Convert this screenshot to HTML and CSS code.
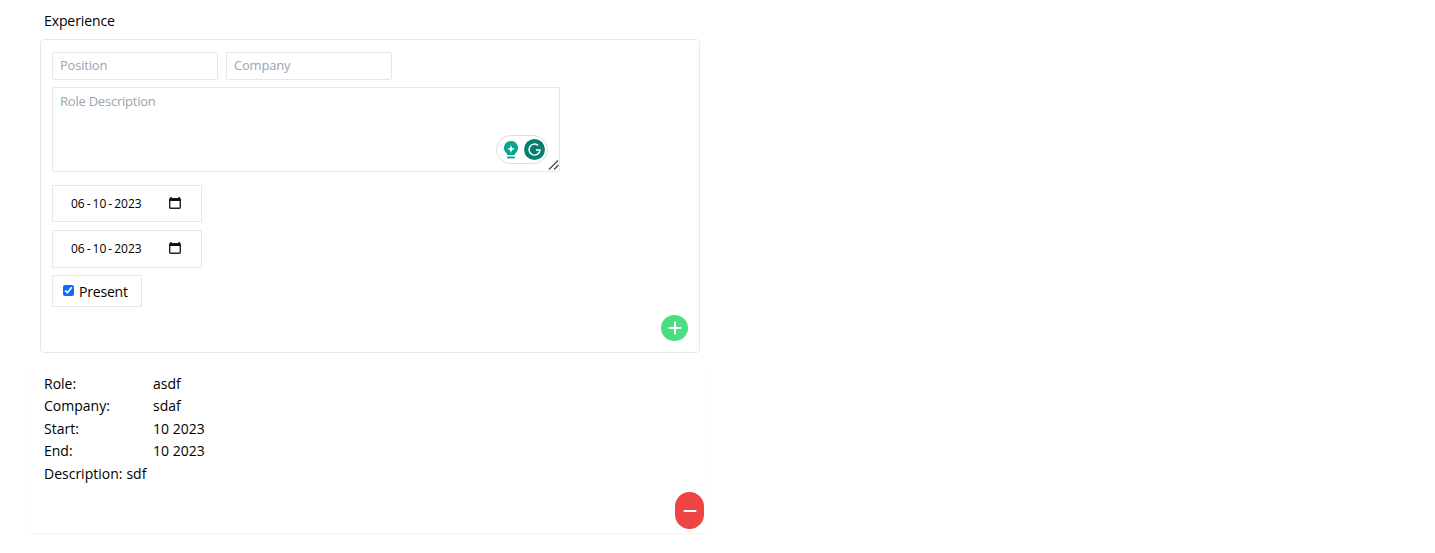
FILE: index.html
```html
<!DOCTYPE html>
<html lang="en">
<head>
<meta charset="utf-8">
<title>Experience</title>
<link rel="stylesheet" href="styles.css">
</head>
<body>
<main class="section">
  <h2 class="section-title">Experience</h2>
  <form class="card">
    <div class="row">
      <input class="field" type="text" placeholder="Position">
      <input class="field" type="text" placeholder="Company">
    </div>
    <div class="area-wrap">
      <textarea class="area" placeholder="Role Description"></textarea>
      <div class="grammarly">
        <svg class="g-bulb" width="16" height="18" viewBox="0 0 16 18"><path d="M8 0a7 7 0 0 1 4.200 12.600V13a1 1 0 0 1-1 1H4.800a1 1 0 0 1-1-1v-.4A7 7 0 0 1 8 0z" fill="#07a58e"/><path d="M8 4l1 3 3 1-3 1-1 3-1-3-3-1 3-1z" fill="#fff"/><rect x="4" y="15.500" width="8" height="2" rx="1" fill="#07a58e"/></svg>
        <svg class="g-logo" width="21" height="21" viewBox="0 0 21 21"><circle cx="10.500" cy="10.500" r="10.500" fill="#05806f"/><path d="M14.200 6.500A5.500 5.500 0 1 0 16 11h-4" fill="none" stroke="#fff" stroke-width="1.400"/></svg>
      </div>
      <svg class="grip" width="11" height="10" viewBox="0 0 11 10"><path d="M1 9.500L10 .5M6 9.500L10.500 5" stroke="#444" stroke-width="1.200"/></svg>
    </div>
    <div class="date-box first"><span class="date-text"><span>06</span><span class="sep">-</span><span>10</span><span class="sep">-</span><span>2023</span></span>
      <svg class="cal" width="14" height="14" viewBox="0 0 14 14"><path d="M3 1v2M11 1v2" stroke="#111" stroke-width="1.500"/><rect x="1.700" y="2.700" width="10.600" height="9.600" rx="1" fill="none" stroke="#222" stroke-width="1.400"/><rect x="1.500" y="2.500" width="11" height="2.500" fill="#111"/></svg>
    </div>
    <div class="date-box tall"><span class="date-text"><span>06</span><span class="sep">-</span><span>10</span><span class="sep">-</span><span>2023</span></span>
      <svg class="cal" width="14" height="14" viewBox="0 0 14 14"><path d="M3 1v2M11 1v2" stroke="#111" stroke-width="1.500"/><rect x="1.700" y="2.700" width="10.600" height="9.600" rx="1" fill="none" stroke="#222" stroke-width="1.400"/><rect x="1.500" y="2.500" width="11" height="2.500" fill="#111"/></svg>
    </div>
    <label class="present"><input class="check" type="checkbox" checked><span>Present</span></label>
    <div class="card-foot">
      <button class="add" type="button" aria-label="Add">
        <svg width="14" height="14" viewBox="0 0 14 14"><path d="M7 1.500v11M1.500 7h11" stroke="#fff" stroke-width="2" stroke-linecap="round"/></svg>
      </button>
    </div>
  </form>
  <section class="entry">
    <dl class="entry-list">
      <div class="entry-row"><dt>Role:</dt><dd>asdf</dd></div>
      <div class="entry-row"><dt>Company:</dt><dd>sdaf</dd></div>
      <div class="entry-row"><dt>Start:</dt><dd>10 2023</dd></div>
      <div class="entry-row"><dt>End:</dt><dd>10 2023</dd></div>
      <div class="entry-row"><dt class="auto">Description:</dt><dd>sdf</dd></div>
    </dl>
    <button class="remove" type="button" aria-label="Remove">
      <svg width="14" height="4" viewBox="0 0 14 4"><path d="M1.500 2h11" stroke="#fff" stroke-width="2" stroke-linecap="round"/></svg>
    </button>
  </section>
</main>
</body>
</html>
```
FILE: styles.css
```css
* { box-sizing: border-box; }
html, body { margin: 0; background: #fff; }
body { font-family: "Open Sans", "Noto Sans", sans-serif; font-size: 14px; color: #000; height: 553px; overflow: hidden; }
.section { width: 675px; margin-left: 32px; padding-top: 11px; }
.section-title { margin: 0 0 8px 12px; font-size: 14px; font-weight: 400; line-height: 20px; letter-spacing: -.1px; }
.card { width: 660px; height: 314px; margin-left: 8px; border: 1px solid #e5e7eb; border-radius: 4px; padding: 12px 11px 0; }
.row { display: flex; gap: 8px; }
.field { width: 166px; height: 28px; border: 1px solid #e5e7eb; border-radius: 2px; padding: 0 7px 2px; font: inherit; font-size: 13px; letter-spacing: -.2px; outline: 0; }
.field::placeholder, .area::placeholder { color: #9ca3af; opacity: 1; }
.area-wrap { position: relative; width: 508px; height: 85px; margin-top: 7px; }
.area { display: block; width: 508px; height: 85px; border: 1px solid #e5e7eb; border-radius: 2px; padding: 4px 7px; font: inherit; font-size: 13px; letter-spacing: -.23px; line-height: 18px; outline: 0; resize: none; }
.grammarly { position: absolute; left: 444px; top: 48px; width: 52px; height: 29px; border: 1px solid #d9dde8; border-radius: 15px; background: #fff; display: flex; align-items: center; gap: 4px; padding-left: 6px; }
.g-bulb { flex: none; }
.g-logo { flex: none; margin-left: 1px; }
.grip { position: absolute; right: 1px; bottom: 2px; }
.date-box { width: 150px; height: 37px; margin-top: 13px; border: 1px solid #e5e7eb; display: flex; align-items: center; justify-content: space-between; padding: 0 19px 2px 18px; }
.date-box.first { padding-bottom: 1px; }
.date-box.tall { height: 38px; margin-top: 8px; }
.date-text { display: flex; font-size: 12px; }
.sep { margin: 0 2px; }
.cal { display: block; }
.present { width: 90px; height: 32px; margin-top: 7px; border: 1px solid #e5e7eb; display: flex; align-items: center; gap: 5px; padding-left: 10px; letter-spacing: -.2px; }
.check { width: 11px; height: 11px; margin: 0 0 1px; accent-color: #0a6cff; }
.card-foot { display: flex; justify-content: flex-end; margin-top: 8px; }
.add { width: 27px; height: 26px; border: 0; padding: 0; border-radius: 50%; background: #4ade80; display: flex; align-items: center; justify-content: center; }
.entry { position: relative; width: 675px; height: 168px; margin-top: 12px; box-shadow: 0 1px 2px rgba(0,0,0,.05); padding: 7.700px 12px 0; }
.entry-list { margin: 0; }
.entry-row { display: flex; height: 22.500px; line-height: 22.500px; letter-spacing: 0; }
dt { width: 109px; }
dt.auto { width: auto; margin-right: 4px; }
dd { margin: 0; }
.remove { position: absolute; right: 3px; top: 127px; width: 29px; height: 37px; border: 0; padding: 0; border-radius: 15px; background: #ef4444; display: flex; align-items: center; justify-content: center; }
```
